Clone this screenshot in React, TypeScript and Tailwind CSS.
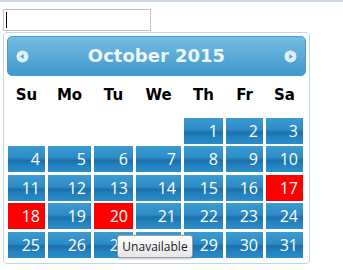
import React from "react";

const cols = ["Su", "Mo", "Tu", "We", "Th", "Fr", "Sa"];
const red = new Set([17, 18, 20]);

function Cell({ d }: { d: number | null }) {
  if (d === null) return <div />;
  const isRed = red.has(d);
  return (
    <div
      className={
        "flex h-[26px] items-center justify-end pr-[5px] text-[16px] leading-none text-white " +
        (isRed
          ? "bg-[#fe0000]"
          : "bg-[linear-gradient(to_bottom,#3c9bd2_0%,#2d8bc5_45%,#1c70aa_55%,#2383c0_75%,#2a8cc8_100%)]")
      }
      style={{ fontFamily: '"Open Sans", "Noto Sans", sans-serif' }}
    >
      {d}
    </div>
  );
}

export default function App() {
  const days: (number | null)[] = [null, null, null, null];
  for (let i = 1; i <= 31; i++) days.push(i);
  return (
    <div className="relative h-[270px] w-[343px] overflow-hidden border-t-2 border-[#c9d5e1] bg-white">
      <div className="ml-[3px] mt-[7px] flex h-[22px] w-[148px] items-center border border-[#c3c3c3] pl-[2px]">
        <div className="h-[16px] w-px bg-black" />
      </div>
      <div className="ml-[3px] mt-[1px] w-[307px] rounded-[4px] border border-[#bcd6ea] bg-white px-[3px] pb-[5px] pt-[3px]">
        <div className="flex h-[40px] items-center justify-between rounded-[5px] border border-[#4a9ccf] bg-[linear-gradient(to_bottom,#75bce1_0%,#5aaad8_50%,#3f98cb_100%)] px-[8px]">
          <svg width="13" height="13" viewBox="0 0 13 13">
            <circle cx="6.5" cy="6.5" r="6" fill="#dfeef8" />
            <path d="M4.2 6.5 L7.6 4 L7.6 9 Z" fill="#5a9fcb" />
          </svg>
          <div
            className="text-[18px] font-bold leading-none text-[#eef7fc]"
            style={{ fontFamily: '"DejaVu Sans", Verdana, sans-serif' }}
          >
            October 2015
          </div>
          <svg width="13" height="13" viewBox="0 0 13 13">
            <circle cx="6.5" cy="6.5" r="6" fill="#dfeef8" />
            <path d="M8.8 6.5 L5.4 4 L5.4 9 Z" fill="#5a9fcb" />
          </svg>
        </div>
        <div className="ml-[1px] grid grid-cols-[37px_43px_39px_45px_39px_37px_37px] gap-x-[3px] gap-y-[2.5px]">
          {cols.map((c) => (
            <div
              key={c}
              className="flex h-[39px] items-center justify-center pb-[1px] text-[15px] font-bold text-black"
              style={{ fontFamily: '"DejaVu Sans", Verdana, sans-serif' }}
            >
              {c}
            </div>
          ))}
          {days.map((d, i) => (
            <Cell key={i} d={d} />
          ))}
        </div>
      </div>
      <div
        className="absolute left-[117px] top-[233px] flex h-[23px] w-[76px] items-center justify-center rounded-[3px] border border-[#a0a0a0] bg-[linear-gradient(to_bottom,#ffffff,#e6e6ea)] text-[12px] text-[#222] shadow-[0_1px_2px_rgba(0,0,0,0.25)]"
        style={{ fontFamily: '"Open Sans", "Noto Sans", sans-serif' }}
      >
        Unavailable
      </div>
    </div>
  );
}
